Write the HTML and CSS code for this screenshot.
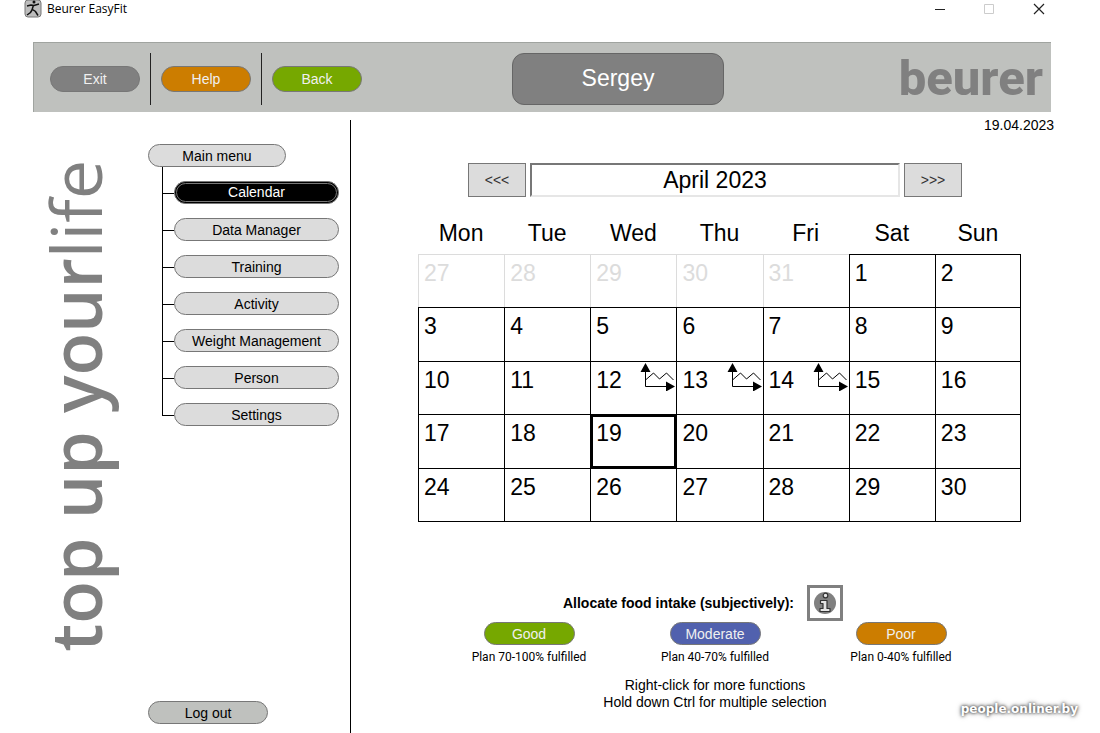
FILE: index.html
```html
<!DOCTYPE html>
<html lang="en">
<head>
    <meta charset="UTF-8">
    <meta name="viewport" content="width=device-width, initial-scale=1.0">
    <title>Beurer EasyFit</title>
    <link rel="stylesheet" href="styles.css">
</head>
<body>
    <div class="titlebar">
        <svg class="app-icon" viewBox="0 0 18 18" width="18" height="18">
            <rect x="1" y="0" width="16" height="17" rx="3" fill="#bdbdbd" stroke="#777"/>
            <circle cx="10" cy="2" r="1.500" fill="#111"/>
            <path d="M3 6l4-1 3 .5 5-1.500M9.500 5L8 10M8 10l-1.500 2.500L3 15M8.500 9.500l3 2 2.500 4" fill="none" stroke="#111" stroke-width="1.500"/>
        </svg>
        <span class="app-title">Beurer EasyFit</span>
        <div class="window-buttons">
            <button type="button" aria-label="Minimize"><svg viewBox="0 0 12 12" width="12" height="12"><path d="M2 6.500h10" stroke="#222"/></svg></button>
            <button type="button" aria-label="Maximize" disabled><svg viewBox="0 0 12 12" width="12" height="12"><path d="M1.500 1.500h9v9h-9z" fill="none" stroke="#ccc"/></svg></button>
            <button type="button" aria-label="Close"><svg viewBox="0 0 12 12" width="12" height="12"><path d="M1 1l10 10M11 1L1 11" stroke="#222" stroke-width="1.200"/></svg></button>
        </div>
    </div>

    <div class="app">
        <header class="toolbar">
            <button type="button" class="pill gray">Exit</button>
            <span class="separator"></span>
            <button type="button" class="pill orange">Help</button>
            <span class="separator"></span>
            <button type="button" class="pill green">Back</button>
            <button type="button" class="user">Sergey</button>
            <span class="logo">beurer</span>
        </header>

        <div class="main">
            <aside class="sidebar">
                <div class="slogan">top up your<span>life</span></div>
                <nav class="menu">
                    <button type="button" class="pill menu-title">Main menu</button>
                    <ul>
                        <li><button type="button" class="pill active">Calendar</button></li>
                        <li><button type="button" class="pill">Data Manager</button></li>
                        <li><button type="button" class="pill">Training</button></li>
                        <li><button type="button" class="pill">Activity</button></li>
                        <li><button type="button" class="pill">Weight Management</button></li>
                        <li><button type="button" class="pill">Person</button></li>
                        <li><button type="button" class="pill">Settings</button></li>
                    </ul>
                    <button type="button" class="pill logout">Log out</button>
                </nav>
            </aside>

            <main class="content">
                <div class="date">19.04.2023</div>

                <div class="month-nav">
                    <button type="button" aria-label="Previous month">&lt;&lt;&lt;</button>
                    <input type="text" value="April 2023" aria-label="Month" readonly>
                    <button type="button" aria-label="Next month">&gt;&gt;&gt;</button>
                </div>

                <table class="calendar">
                    <thead>
                        <tr>
                            <th>Mon</th>
                            <th>Tue</th>
                            <th>Wed</th>
                            <th>Thu</th>
                            <th>Fri</th>
                            <th>Sat</th>
                            <th>Sun</th>
                        </tr>
                    </thead>
                    <tbody>
                        <tr>
                            <td class="other">27</td>
                            <td class="other">28</td>
                            <td class="other">29</td>
                            <td class="other">30</td>
                            <td class="other">31</td>
                            <td>1</td>
                            <td>2</td>
                        </tr>
                        <tr>
                            <td>3</td>
                            <td>4</td>
                            <td>5</td>
                            <td>6</td>
                            <td>7</td>
                            <td>8</td>
                            <td>9</td>
                        </tr>
                        <tr>
                            <td>10</td>
                            <td>11</td>
                            <td>
                                <div class="day">12
                                    <svg class="chart" viewBox="0 0 35 28" width="35" height="28"><path d="M5.500 5v18.500H29M5.500 17l8-7 6 6 7-6 7 7" fill="none" stroke="#000"/><path d="M5.500 0l5 9h-10zM35 23.500l-9-5v10z"/></svg>
                                </div>
                            </td>
                            <td>
                                <div class="day">13
                                    <svg class="chart" viewBox="0 0 35 28" width="35" height="28"><path d="M5.500 5v18.500H29M5.500 17l8-7 6 6 7-6 7 7" fill="none" stroke="#000"/><path d="M5.500 0l5 9h-10zM35 23.500l-9-5v10z"/></svg>
                                </div>
                            </td>
                            <td>
                                <div class="day">14
                                    <svg class="chart" viewBox="0 0 35 28" width="35" height="28"><path d="M5.500 5v18.500H29M5.500 17l8-7 6 6 7-6 7 7" fill="none" stroke="#000"/><path d="M5.500 0l5 9h-10zM35 23.500l-9-5v10z"/></svg>
                                </div>
                            </td>
                            <td>15</td>
                            <td>16</td>
                        </tr>
                        <tr>
                            <td>17</td>
                            <td>18</td>
                            <td class="today">19</td>
                            <td>20</td>
                            <td>21</td>
                            <td>22</td>
                            <td>23</td>
                        </tr>
                        <tr>
                            <td>24</td>
                            <td>25</td>
                            <td>26</td>
                            <td>27</td>
                            <td>28</td>
                            <td>29</td>
                            <td>30</td>
                        </tr>
                    </tbody>
                </table>

                <section class="food">
                    <div class="food-title">
                        <strong>Allocate food intake (subjectively):</strong>
                        <button type="button" class="info" aria-label="Info">
                            <svg viewBox="0 0 24 24" width="24" height="24">
                                <circle cx="12" cy="12" r="11" fill="#808080"/>
                                <path d="M7.500 9.500h6.500v8h3v3H7v-3h3v-5H7.500z" fill="#e4e4e4" stroke="#333" stroke-width="1.200" stroke-linejoin="round"/>
                                <circle cx="12.500" cy="4.500" r="2.300" fill="#e4e4e4" stroke="#333" stroke-width="1.200"/>
                            </svg>
                        </button>
                    </div>
                    <div class="food-levels">
                        <div class="level">
                            <button type="button" class="pill green">Good</button>
                            <span>Plan 70-100% fulfilled</span>
                        </div>
                        <div class="level">
                            <button type="button" class="pill blue">Moderate</button>
                            <span>Plan 40-70% fulfilled</span>
                        </div>
                        <div class="level">
                            <button type="button" class="pill orange">Poor</button>
                            <span>Plan 0-40% fulfilled</span>
                        </div>
                    </div>
                    <p class="hint">Right-click for more functions<br>Hold down Ctrl for multiple selection</p>
                </section>
            </main>
        </div>
    </div>

    <div class="watermark">people.onliner.by</div>
</body>
</html>
```
FILE: styles.css
```css
* {
    box-sizing: border-box;
}
body {
    margin: 0;
    min-height: 100vh;
    display: flex;
    flex-direction: column;
    background-color: #fff;
    color: #000;
    font-family: "Liberation Sans", Arial, sans-serif;
    font-size: 14px;
    line-height: 17px;
}
button, input {
    font-family: inherit;
    font-size: inherit;
    line-height: inherit;
    color: inherit;
    padding: 0;
}

/* window title bar */
.titlebar {
    display: flex;
    align-items: flex-start;
    height: 42px;
    padding: 0 55px 0 24px;
}
.app-title {
    margin-left: 5px;
    font-family: "Open Sans", sans-serif;
    font-size: 12px;
}
.window-buttons {
    display: flex;
    gap: 38px;
    margin-left: auto;
    padding-top: 3px;
}
.window-buttons button {
    display: flex;
    border: none;
    background: none;
}

.app {
    flex: 1;
    display: flex;
    flex-direction: column;
    padding: 0 49px 0 33px;
}

/* rounded buttons */
.pill {
    height: 23px;
    padding-top: 1px;
    border: 1px solid #777;
    border-radius: 12px;
    background-color: #dcdcdc;
}
.pill.gray {
    background-color: #808080;
    color: #f0f0f0;
}
.pill.orange {
    background-color: #cc7d00;
    color: #f0f0f0;
}
.pill.green {
    background-color: #76a800;
    color: #f0f0f0;
}
.pill.blue {
    background-color: #5161ae;
    color: #f0f0f0;
}

/* header */
.toolbar {
    display: flex;
    align-items: center;
    height: 70px;
    padding: 2px 8px 0 16px;
    border-top: 1px solid #a0a4a0;
    border-left: 1px solid #a0a4a0;
    background-color: #bfc1be;
}
.toolbar .pill {
    width: 90px;
    height: 26px;
    padding-top: 2px;
    border-radius: 13px;
}
.separator {
    width: 1px;
    height: 52px;
    margin: 0 10px;
    background-color: #222;
}
.user {
    width: 212px;
    height: 52px;
    margin-left: 150px;
    border: 1px solid #666;
    border-radius: 12px;
    background-color: #808080;
    color: #fff;
    font-size: 23px;
}
.logo {
    margin-left: auto;
    color: #808080;
    font-family: Roboto, sans-serif;
    font-size: 49px;
    font-weight: 800;
    line-height: 52px;
}

.main {
    flex: 1;
    display: flex;
    padding-top: 8px;
}

/* left side */
.sidebar {
    display: flex;
    width: 318px;
    border-right: 1px solid #000;
}
.slogan {
    align-self: flex-start;
    width: 115px;
    margin-top: 40px;
    writing-mode: vertical-rl;
    transform: rotate(180deg);
    color: #808080;
    font-family: "Open Sans", sans-serif;
    font-size: 70px;
    font-weight: 600;
    line-height: 84px;
    white-space: nowrap;
}
.slogan span {
    font-weight: 400;
}
.menu {
    flex: 1;
    display: flex;
    flex-direction: column;
    padding: 24px 11px 9px 0;
}
.menu ul {
    list-style: none;
    margin: 0 0 0 14px;
    padding: 0;
}
.menu li {
    display: flex;
    align-items: flex-end;
    height: 37px;
}
.menu li::before {
    content: "";
    align-self: flex-start;
    width: 11px;
    height: 37px;
    margin-top: -11px;
    border-left: 1px solid #000;
    border-bottom: 1px solid #000;
}
.menu li:first-child::before {
    height: 26px;
    margin-top: 0;
}
.menu li .pill {
    flex: 1;
}
.menu .active {
    padding-top: 0;
    border: 3px double #777;
    background-color: #000;
    color: #fff;
}
.menu-title {
    width: 138px;
}
.menu .logout {
    width: 120px;
    margin-top: auto;
    background-color: #bfc1be;
}

/* calendar page */
.content {
    flex: 1;
    display: flex;
    flex-direction: column;
    padding-left: 67px;
}
.date {
    align-self: flex-end;
    width: 67px;
    margin-top: -3px;
    white-space: nowrap;
}
.month-nav {
    display: flex;
    gap: 4px;
    height: 34px;
    margin: 29px 89px 0 50px;
}
.month-nav button {
    width: 58px;
    border: 1px solid #777;
    background-color: #dcdcdc;
    color: #333;
}
.month-nav input {
    flex: 1;
    min-width: 0;
    border: 2px solid #e6e6e6;
    border-top-color: #777;
    border-left-color: #777;
    font-size: 23px;
    text-align: center;
}
.calendar {
    width: calc(100% - 30px);
    height: 310px;
    margin-top: 15px;
    table-layout: fixed;
    border-collapse: separate;
    border-spacing: 0;
    border-bottom: 1px solid #000;
    font-size: 23px;
    line-height: 26px;
}
.calendar th {
    height: 42px;
    padding: 0;
    font-weight: normal;
}
.calendar td {
    height: 53px;
    padding: 5px 0 0 5px;
    border-top: 1px solid #000;
    border-left: 1px solid #000;
    vertical-align: top;
}
.calendar td:last-child {
    border-right: 1px solid #000;
}
.calendar td.other {
    border-color: #dcdcdc;
    color: #dcdcdc;
}
.calendar td.today {
    box-shadow: inset 0 0 0 2px #000;
}
.day {
    display: flex;
    justify-content: space-between;
    height: 26px;
    padding-right: 1px;
}
.chart {
    margin-top: -4px;
}

/* food intake */
.food {
    margin: 63px 39px 0 0;
}
.food-title {
    display: flex;
    align-items: center;
    justify-content: center;
    gap: 13px;
    padding-right: 24px;
}
.info {
    display: flex;
    align-items: center;
    justify-content: center;
    width: 36px;
    height: 36px;
    border: 3px solid #808080;
    background-color: #fff;
}
.food-levels {
    display: grid;
    grid-template-columns: repeat(3, 1fr);
    margin-top: 1px;
    padding: 0 18px;
}
.level {
    display: flex;
    flex-direction: column;
    align-items: center;
    gap: 4px;
    font-family: Roboto, sans-serif;
    font-size: 12px;
}
.level .pill {
    width: 91px;
    font-family: "Liberation Sans", Arial, sans-serif;
    font-size: 14px;
}
.hint {
    margin: 11px 0 0;
    text-align: center;
}

.watermark {
    position: absolute;
    right: 22px;
    bottom: 15px;
    color: #fff;
    font-family: "DejaVu Sans", sans-serif;
    font-size: 12px;
    font-weight: bold;
    text-shadow: 0 0 3px #333, 0 0 5px #666;
}
```
